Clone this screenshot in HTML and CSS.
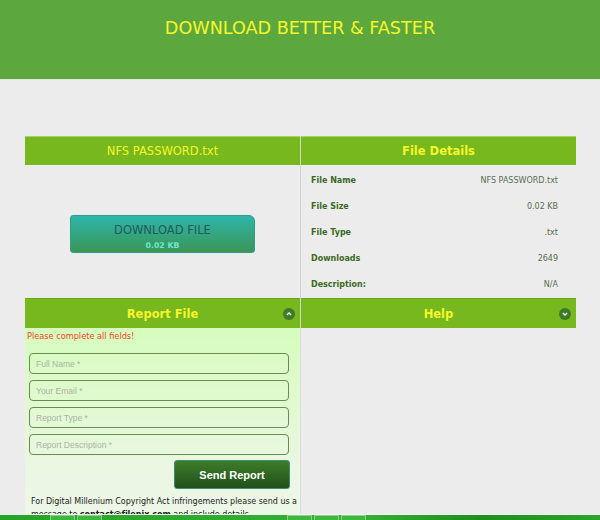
FILE: index.html
```html
<!DOCTYPE html>
<html>
<head>
<meta charset="utf-8">
<title>Download</title>
<link rel="stylesheet" href="styles.css">
</head>
<body>
<header class="top">
  <h1 class="title">DOWNLOAD BETTER &amp; FASTER</h1>
</header>
<main class="panel">
  <div class="row">
    <section class="col left">
      <div class="bar">NFS PASSWORD.txt</div>
      <div class="dl-body">
        <a class="dl-btn" href="#">
          <span class="dl-main">DOWNLOAD FILE</span>
          <span class="dl-size">0.02 KB</span>
        </a>
      </div>
    </section>
    <section class="col right">
      <div class="bar bold">File Details</div>
      <div class="details">
        <div class="drow"><span class="lbl">File Name</span><span class="val">NFS PASSWORD.txt</span></div>
        <div class="drow"><span class="lbl">File Size</span><span class="val">0.02 KB</span></div>
        <div class="drow"><span class="lbl">File Type</span><span class="val">.txt</span></div>
        <div class="drow"><span class="lbl">Downloads</span><span class="val">2649</span></div>
        <div class="drow"><span class="lbl">Description:</span><span class="val">N/A</span></div>
      </div>
    </section>
  </div>
  <div class="row row2">
    <section class="col left">
      <div class="bar bold bar2">Report File
        <span class="toggle"><svg width="12" height="12" viewBox="0 0 12 12"><circle cx="6" cy="6" r="6" fill="#3e7a27"/><path d="M3.8 7 L6 4.9 L8.2 7" stroke="#fff" stroke-width="1.4" fill="none"/></svg></span>
      </div>
      <div class="report">
        <p class="warn">Please complete all fields!</p>
        <form class="form">
          <input class="field" type="text" placeholder="Full Name *">
          <input class="field" type="text" placeholder="Your Email *">
          <input class="field" type="text" placeholder="Report Type *">
          <input class="field" type="text" placeholder="Report Description *">
          <button class="send" type="button">Send Report</button>
        </form>
        <p class="dmca">For Digital Millenium Copyright Act infringements please send us a message to <b>contact@filenix.com</b> and include details.</p>
      </div>
    </section>
    <section class="col right">
      <div class="bar bold bar2">Help
        <span class="toggle"><svg width="12" height="12" viewBox="0 0 12 12"><circle cx="6" cy="6" r="6" fill="#3e7a27"/><path d="M3.8 5 L6 7.1 L8.2 5" stroke="#fff" stroke-width="1.4" fill="none"/></svg></span>
      </div>
      <div class="help"></div>
    </section>
  </div>
</main>
<div class="taskbar">
  <span class="tb tb-a"></span>
  <span class="tb tb-b"></span>
  <span class="tb tb-c"></span>
  <span class="tb"></span>
  <span class="tb"></span>
</div>
</body>
</html>
```
FILE: styles.css
```css
html, body {
  margin: 0;
  padding: 0;
  overflow: hidden;
  height: 520px;
}
body {
  background: #ececec;
  font-family: "DejaVu Sans", Verdana, sans-serif;
  font-size: 8px;
  color: #222;
}
.top {
  height: 79px;
  background: #5ca83f;
  border-bottom: 1px solid #dfe7da;
}
.title {
  margin: 0;
  padding-top: 18px;
  text-align: center;
  font-weight: normal;
  font-size: 17.6px;
  line-height: 21px;
  color: #f6f62a;
}
.panel {
  margin: 56px 0 0 25px;
  width: 551px;
}
.row {
  display: flex;
}
.col.left {
  width: 275px;
  border-right: 1px solid #d4d4d4;
}
.col.right {
  width: 275px;
}
.bar {
  height: 28px;
  line-height: 28px;
  background: #77b81e;
  border-top: 1px solid #a8d070;
  color: #f6f62a;
  text-align: center;
  font-size: 11.5px;
  position: relative;
}
.bold { font-weight: bold; }
.dl-body {
  height: 133px;
  box-sizing: border-box;
  padding-top: 50px;
  display: flex;
  justify-content: center;
  align-items: flex-start;
}
.dl-btn {
  display: flex;
  flex-direction: column;
  align-items: center;
  width: 185px;
  height: 38px;
  box-sizing: border-box;
  padding-top: 7px;
  background: linear-gradient(#2eb6aa, #3a9556);
  border: 1px solid #2f9d86;
  border-radius: 3px 6px 3px 3px;
  text-decoration: none;
}
.dl-main {
  font-size: 11.5px;
  line-height: 14px;
  color: #1f5b60;
}
.dl-size {
  margin-top: 3px;
  font-size: 7.8px;
  font-weight: bold;
  line-height: 11px;
  color: #6fe8cc;
}
.details {
  height: 133px;
  box-sizing: border-box;
  padding: 3px 18px 0 10px;
}
.drow {
  display: flex;
  justify-content: space-between;
  height: 26px;
  line-height: 26px;
}
.lbl {
  font-weight: bold;
  color: #3b6a1f;
}
.val {
  color: #586e52;
}
.bar2 {
  height: 29px;
  line-height: 30px;
  border-top: 1px solid #6aa816;
}
.toggle {
  position: absolute;
  right: 5px;
  top: 9px;
  width: 12px;
  height: 12px;
  line-height: 0;
}
.report {
  height: 200px;
  background: linear-gradient(#d6fcbd, #eaf7e2 70%, #eef6ea);
}
.warn {
  margin: 0;
  padding: 3px 0 0 2px;
  line-height: 10px;
  font-size: 8.2px;
  color: #f2452a;
}
.form {
  display: flex;
  flex-direction: column;
  align-items: flex-start;
  gap: 6px;
  padding: 12px 0 0 4px;
}
.field {
  width: 260px;
  height: 21px;
  box-sizing: border-box;
  margin: 0;
  padding: 0 6px;
  border: 1px solid #6c8b50;
  border-radius: 4px;
  background: transparent;
  font-family: "Liberation Sans", Arial, sans-serif;
  font-size: 8.5px;
  color: #333;
  outline: none;
}
.field::placeholder {
  color: #a9b5a2;
}
.send {
  margin: -1px 0 0 145px;
  width: 116px;
  height: 29px;
  box-sizing: border-box;
  border: 1px solid #3a8f72;
  border-radius: 3px;
  background: linear-gradient(#3e7c2a, #21501a);
  color: #fff;
  font-family: "Liberation Sans", Arial, sans-serif;
  font-weight: bold;
  font-size: 11px;
  padding: 0;
}
.dmca {
  margin: 6px -4px 0 0;
  padding: 0 0 0 6px;
  line-height: 13px;
  letter-spacing: -0.02px;
  color: #222;
}
.help {
  height: 200px;
  border-left: 1px solid #dcdcdc;
  margin-left: -1px;
}
.taskbar {
  position: fixed;
  left: 0;
  right: 0;
  bottom: 0;
  height: 5px;
  border-top: 1px solid #f4f4f4;
  background: linear-gradient(90deg, #25a525, #34b134 60%, #1d8f1d 80%, #2aa52a);
  display: flex;
  align-items: flex-end;
  z-index: 5;
}
.tb {
  width: 23px;
  height: 4px;
  border: 1px solid #8fd08f;
  border-bottom: 0;
  background: #3cb83c;
  margin-left: 2px;
}
.tb-a { margin-left: 50px; }
.tb-c { margin-left: 185px; }
```
